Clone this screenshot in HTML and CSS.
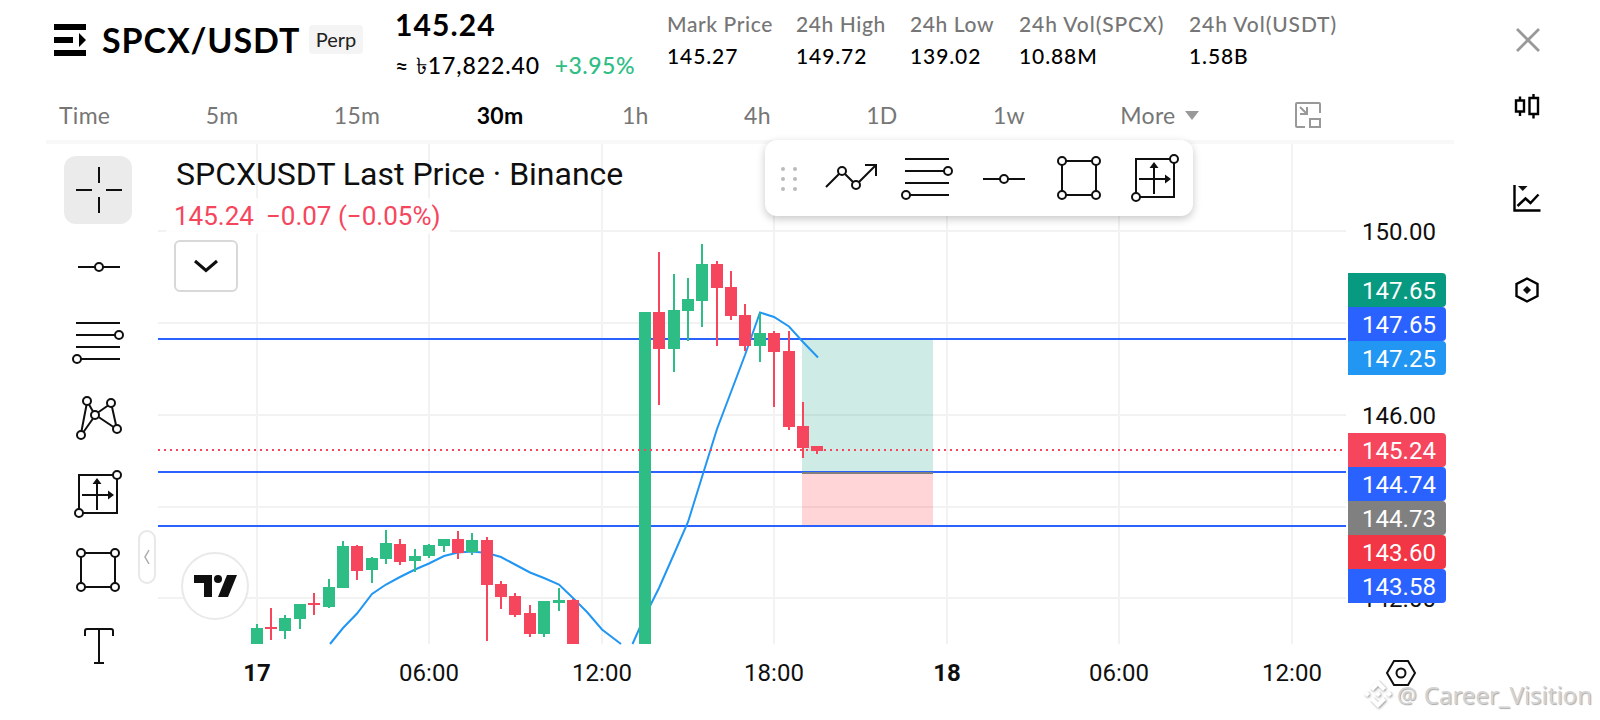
FILE: index.html
```html
<!DOCTYPE html>
<html lang="en">
  <head>
    <meta charset="utf-8" />
    <meta name="viewport" content="width=device-width,initial-scale=1" />
    <title>SPCX/USDT Perp</title>
    <link rel="stylesheet" href="styles.css">
  </head>
  <body>
    <!-- shared drawing tool icons -->
    <svg class="defs" width="0" height="0">
      <symbol id="i-line" viewBox="0 0 56 56">
        <path d="M7 28H24M32 28H49"/><circle cx="28" cy="28" r="4"/>
      </symbol>
      <symbol id="i-fib" viewBox="0 0 56 56">
        <path d="M5 8H49M5 20H44M5 32H49M10 44H49"/>
        <circle cx="48" cy="20" r="4"/><circle cx="6" cy="44" r="4"/>
      </symbol>
      <symbol id="i-rect" viewBox="0 0 56 56">
        <path d="M14 10H40M14 44H40M10 14V40M44 14V40"/>
        <circle cx="10" cy="10" r="4"/><circle cx="44" cy="10" r="4"/>
        <circle cx="10" cy="44" r="4"/><circle cx="44" cy="44" r="4"/>
      </symbol>
      <symbol id="i-range" viewBox="0 0 56 56">
        <path d="M42 8H8V42M12 46H46V12M26 43V14M11 28H41"/>
        <path class="solid" d="M26 11L30.5 17H21.5ZM43 28L37 23.5V32.5Z"/>
        <circle cx="46" cy="8" r="4"/><circle cx="8" cy="46" r="4"/>
      </symbol>
    </svg>

    <div class="screen">
      <div class="main">
        <div class="header">
          <svg class="menu" width="32" height="32" viewBox="0 0 32 32">
            <path d="M0 0H32V6H0ZM0 13H19V19H0ZM0 26H32V32H0ZM25 9L32 16L25 23Z"/>
          </svg>
          <div class="pair">SPCX/USDT</div>
          <div class="perp">Perp</div>
          <div class="price">
            <div class="last">145.24</div>
            <div class="sub">
              <span class="fiat">≈ ৳17,822.40</span>
              <span class="change">+3.95%</span>
            </div>
          </div>
          <div class="stats">
            <div class="stat s1"><div class="label">Mark Price</div><div class="value">145.27</div></div>
            <div class="stat s2"><div class="label">24h High</div><div class="value">149.72</div></div>
            <div class="stat s3"><div class="label">24h Low</div><div class="value">139.02</div></div>
            <div class="stat s4"><div class="label">24h Vol(SPCX)</div><div class="value">10.88M</div></div>
            <div class="stat s5"><div class="label">24h Vol(USDT)</div><div class="value">1.58B</div></div>
          </div>
        </div>

        <div class="intervals">
          <span>Time</span>
          <span>5m</span>
          <span>15m</span>
          <span class="active">30m</span>
          <span>1h</span>
          <span>4h</span>
          <span>1D</span>
          <span>1w</span>
          <span class="more">More <i class="caret"></i></span>
          <svg class="pip" width="28" height="28" viewBox="0 0 28 28">
            <path d="M11 26H3Q2 26 2 25V3Q2 2 3 2H25Q26 2 26 3V12M6 6L13 13M13 6V13H6M16 18H26V26H16Z"/>
          </svg>
        </div>

        <div class="board">
          <div class="rail">
            <div class="tool selected">
              <svg class="icon" width="56" height="56" viewBox="0 0 56 56">
                <path d="M29 5V21M29 35V51M6 28H22M36 28H52"/>
              </svg>
            </div>
            <svg class="icon" width="56" height="56"><use href="#i-line"/></svg>
            <svg class="icon" width="56" height="56"><use href="#i-fib"/></svg>
            <svg class="icon" width="56" height="56" viewBox="0 0 56 56">
              <path d="M18 13.500L22 20.500M27 21.500L37 14.500M41 16L45 34M42.500 36L27.500 26M22 27.500L12.500 41M15.500 14L10.500 40"/>
              <circle cx="16" cy="10" r="4"/><circle cx="40" cy="12" r="4"/><circle cx="24" cy="24" r="4"/>
              <circle cx="10" cy="44" r="4"/><circle cx="46" cy="38" r="4"/>
            </svg>
            <svg class="icon" width="56" height="56"><use href="#i-range"/></svg>
            <svg class="icon" width="56" height="56"><use href="#i-rect"/></svg>
            <svg class="icon" width="56" height="56" viewBox="0 0 56 56">
              <path d="M14 17V12Q14 10 16 10H40Q42 10 42 12V17M28 10V44M23 44H33"/>
            </svg>
            <div class="collapse">
              <svg width="8" height="16" viewBox="0 0 8 16"><path d="M6 1L2 8L6 15"/></svg>
            </div>
          </div>

          <div class="chart">
            <svg id="plot" class="plot" width="1296" height="576" viewBox="158 144 1296 576">
              <g id="grid" class="grid"></g>
              <g class="position">
                <rect class="profit" x="802" y="340" width="131" height="133"/>
                <rect class="loss" x="802" y="473" width="131" height="52"/>
              </g>
              <path class="level" d="M158 339H1346M158 472H1346M158 526H1346"/>
              <path class="entry" d="M802 473H933"/>
              <polyline class="ma" points="330,644 343,628 357,613.5 372,594 386,584.5 400,577 415,569.5 429,563.5 444,556 458,552.5 472,551.5 487,553 501,557 515,564.5 530,572.5 544,578 559,584.5 573,598 587,612 602,629.5 621,644"/>
              <polyline class="ma" points="632.5,644 645,616 659,588 674,554 688,522 702,477 717,429 731,392 745,355 760,312.5 774,317 789,326.5 803,342 818,357.5"/>
              <g id="candles"></g>
              <path class="last-line" d="M158 450H1346"/>
              <g id="axis" class="axis"></g>
              <path class="gear" d="M1394 661H1408L1415 673L1408 685H1394L1387 673Z"/>
              <circle class="gear" cx="1401" cy="673" r="4.5"/>
            </svg>

            <div class="legend">
              <div class="legend-title">SPCXUSDT Last Price · Binance</div>
              <div class="legend-values"><span>145.24</span><span>−0.07 (−0.05%)</span></div>
            </div>
            <div class="toggle">
              <svg width="26" height="14" viewBox="0 0 26 14"><path d="M2 2L13 11.5L24 2"/></svg>
            </div>

            <div class="tv">
              <svg width="44" height="22" viewBox="0 0 44 22">
                <path d="M1 0H19V22H11V8H1ZM34 0H44L35 22H25Z"/><circle cx="25" cy="4" r="4"/>
              </svg>
            </div>

            <div class="favorites">
              <svg class="grip" width="16" height="24" viewBox="0 0 16 24">
                <circle cx="2" cy="2" r="2"/><circle cx="14" cy="2" r="2"/>
                <circle cx="2" cy="12" r="2"/><circle cx="14" cy="12" r="2"/>
                <circle cx="2" cy="22" r="2"/><circle cx="14" cy="22" r="2"/>
              </svg>
              <svg class="icon" width="56" height="56" viewBox="0 0 56 56">
                <path d="M2 36L15 23M21 23L29 31M35 31L52 14M41 14H52V25"/>
                <circle cx="18" cy="20" r="4"/><circle cx="32" cy="34" r="4"/>
              </svg>
              <svg class="icon" width="56" height="56"><use href="#i-fib"/></svg>
              <svg class="icon" width="56" height="56"><use href="#i-line"/></svg>
              <svg class="icon" width="56" height="56"><use href="#i-rect"/></svg>
              <svg class="icon" width="56" height="56"><use href="#i-range"/></svg>
            </div>
          </div>
        </div>
      </div>

      <div class="side">
        <svg class="close" width="32" height="32" viewBox="0 0 32 32"><path d="M6 5L28 27M28 5L6 27"/></svg>
        <svg width="32" height="32" viewBox="0 0 32 32">
          <path d="M5 10.500H13V21.500H5ZM18.500 8H27V24H18.500ZM9 6.500V10M9 22V26M22.500 4V8M22.500 24V28.500"/>
        </svg>
        <svg width="32" height="32" viewBox="0 0 32 32">
          <path d="M3.500 3V28.500H29.500M6.500 24L14.500 16.500L19.500 21L27.500 12.500"/>
          <path class="solid" d="M7 4H16.500L11.800 9Z"/>
        </svg>
        <svg width="32" height="32" viewBox="0 0 32 32">
          <path d="M16 4.500L26.500 10V22L16 27.500L5.500 22V10Z"/>
          <path class="solid" d="M16 12L20 16L16 20L12 16Z"/>
        </svg>
      </div>
    </div>

    <div class="watermark">
      <svg width="30" height="30" viewBox="0 0 30 30">
        <path d="M15 1L23 9L20 12L15 7L10 12L7 9ZM4 12L7 15L4 18L1 15ZM26 12L29 15L26 18L23 15ZM15 12L18 15L15 18L12 15ZM10 18L15 23L20 18L23 21L15 29L7 21Z"/>
      </svg>
      <span class="at">@</span><span>Career_Visition</span>
    </div>

    <script src="chart.js"></script>
  </body>
</html>
```
FILE: styles.css
```css
body {
  margin: 0;
  background: #fff;
  color: #000;
  font-family: Lato, "Noto Sans", sans-serif;
}

svg {
  display: block;
  fill: none;
}

.defs {
  position: absolute;
}

.screen {
  display: flex;
  width: 1600px;
  height: 720px;
  overflow: hidden;
}

.main {
  width: 1408px;
  margin-left: 46px;
}

/* header */
.header {
  display: flex;
  height: 92px;
  white-space: nowrap;
}

.menu {
  margin: 24px 16px 0 8px;
  fill: #000;
}

.pair {
  width: 207px;
  margin-top: 20px;
  font-size: 34px;
  line-height: 40px;
  font-weight: 700;
  letter-spacing: 0.9px;
}

.perp {
  box-sizing: border-box;
  width: 54px;
  height: 29px;
  margin-top: 25px;
  border-radius: 4px;
  background: #f4f4f4;
  color: #202020;
  font-size: 20px;
  line-height: 29px;
  text-align: center;
}

.price {
  width: 272px;
  margin-left: 32px;
}

.last {
  margin-top: 6px;
  font-size: 30px;
  line-height: 36px;
  font-weight: 700;
  letter-spacing: 1.1px;
}

.sub {
  display: flex;
  justify-content: space-between;
  width: 240px;
  margin-top: 8px;
  font-size: 23px;
  line-height: 30px;
  font-weight: 500;
  letter-spacing: 0.9px;
}

.change {
  color: #2ebd85;
  letter-spacing: 0.5px;
}

.stats {
  display: flex;
  margin-top: 11px;
  font-size: 21px;
  line-height: 26px;
  font-weight: 500;
  letter-spacing: 0.9px;
}

.label {
  color: #767676;
}

.value {
  margin-top: 6px;
}

.s1 {
  width: 129px;
}

.s2 {
  width: 114px;
}

.s3 {
  width: 109px;
}

.s4 {
  width: 170px;
}

.s1 .label,
.s2 .label,
.s3 .label {
  letter-spacing: 0.6px;
}

/* interval tabs */
.intervals {
  display: flex;
  justify-content: space-between;
  align-items: center;
  height: 46px;
  padding: 0 132px 2px 13px;
  color: #767676;
  font-size: 23px;
  letter-spacing: 0.3px;
}

.intervals .active {
  margin: 0 3px 0 1px;
  color: #000;
  font-weight: 700;
}

.more {
  display: flex;
  align-items: center;
  gap: 9px;
}

.caret {
  border: 7px solid transparent;
  border-top: 9px solid #999;
  border-bottom: 0;
}

.pip {
  stroke: #999;
  stroke-width: 2;
}

/* board */
.board {
  display: flex;
  border-top: 4px solid #f8f8f8;
}

.rail {
  position: relative;
  display: flex;
  flex-direction: column;
  align-items: center;
  gap: 20px;
  width: 106px;
  height: 564px;
  padding-top: 12px;
  box-sizing: border-box;
  flex: none;
  margin-right: 6px;
}

.icon {
  flex: none;
  stroke: #0f0f0f;
  stroke-width: 2;
}

.icon .solid,
.solid {
  fill: #0f0f0f;
  stroke: none;
}

.tool.selected {
  display: flex;
  align-items: center;
  justify-content: center;
  width: 68px;
  height: 68px;
  margin: 0 2px -5px 0;
  border-radius: 12px;
  background: #ebebeb;
}

.collapse {
  position: absolute;
  left: 92px;
  top: 386px;
  display: flex;
  align-items: center;
  justify-content: center;
  box-sizing: border-box;
  width: 18px;
  height: 54px;
  border: 2px solid #e8e8e8;
  border-radius: 9px;
  background: #fff;
  stroke: #aaa;
  stroke-width: 1.5;
}

.chart {
  position: relative;
  width: 1296px;
  font-family: Roboto, sans-serif;
}

.grid {
  stroke: #f2f2f2;
  stroke-width: 2;
}

.profit {
  fill: #089981;
  fill-opacity: 0.2;
}

.loss {
  fill: #ff2d3c;
  fill-opacity: 0.2;
}

.level {
  stroke: #2962ff;
  stroke-width: 2;
}

.entry {
  stroke: #7f7f7f;
  stroke-width: 2;
}

.ma {
  stroke: #2196f3;
  stroke-width: 2;
}

.last-line {
  stroke: #f6465d;
  stroke-width: 2;
  stroke-dasharray: 2 4;
}

.up {
  fill: #2ebd85;
}

.down {
  fill: #f6465d;
}

.axis {
  fill: #0f0f0f;
  font-size: 24px;
  text-anchor: middle;
}

.axis .day {
  font-weight: 700;
}

.axis .tag {
  fill: #fff;
}

.gear {
  stroke: #0f0f0f;
  stroke-width: 2;
}

.legend {
  position: absolute;
  left: 8px;
  top: 10px;
  color: #0f0f0f;
  white-space: nowrap;
}

.legend-title {
  padding-left: 10px;
  font-size: 32px;
  line-height: 40px;
}

.legend-values {
  display: flex;
  gap: 12px;
  width: 284px;
  padding-left: 8px;
  margin-top: 4px;
  box-sizing: border-box;
  background: rgba(255, 255, 255, 0.8);
  color: #f6465d;
  font-size: 26px;
  line-height: 36px;
}

.toggle {
  position: absolute;
  left: 16px;
  top: 96px;
  display: flex;
  align-items: center;
  justify-content: center;
  box-sizing: border-box;
  width: 64px;
  height: 52px;
  border: 2px solid #d8d8d8;
  border-radius: 6px;
  background: #fff;
  stroke: #0f0f0f;
  stroke-width: 3;
}

.tv {
  position: absolute;
  left: 23px;
  top: 408px;
  display: flex;
  align-items: center;
  justify-content: center;
  box-sizing: border-box;
  width: 68px;
  height: 68px;
  border: 2px solid #e9e9e9;
  border-radius: 50%;
  background: #fff;
}

.tv svg {
  fill: #0f0f0f;
}

.favorites {
  position: absolute;
  left: 607px;
  top: -4px;
  display: flex;
  align-items: center;
  gap: 20px;
  box-sizing: border-box;
  width: 428px;
  height: 76px;
  padding: 2px 0 0 16px;
  border-radius: 12px;
  background: #fff;
  box-shadow: 0 3px 8px rgba(0, 0, 0, 0.22);
}

.grip {
  margin-right: 7px;
  fill: #bbb;
}

/* right side */
.side {
  display: flex;
  flex-direction: column;
  gap: 60px;
  padding: 24px 0 0 57px;
  stroke: #000;
  stroke-width: 2.4;
}

.close {
  margin-bottom: -26px;
  stroke: #999;
  stroke-width: 2.8;
}

.watermark {
  position: absolute;
  left: 1363px;
  top: 678px;
  display: flex;
  align-items: center;
  height: 32px;
  color: #d4d4d4;
  font-family: "Noto Sans", sans-serif;
  font-size: 24px;
  text-shadow: 1px 1px 1px #aaa;
}

.watermark svg {
  fill: #fff;
  filter: drop-shadow(1px 1px 1px #999);
}

.at {
  margin: 0 7px 0 4px;
  font-size: 22px;
}
```
FILE: chart.js
```js
// x, wick top, wick bottom, body top, body bottom, direction
var candles = [
  [257, 624, 644, 628, 644, "up"],
  [271, 608, 640, 627, 629, "down"],
  [285, 615, 639, 618, 631, "up"],
  [300, 604, 629, 604, 619, "up"],
  [314, 593, 615, 603, 605, "down"],
  [329, 579, 608, 587, 607, "up"],
  [343, 541, 588, 546, 588, "up"],
  [357, 545, 580, 546, 571, "down"],
  [372, 557, 583, 558, 570, "up"],
  [386, 530, 564, 543, 559, "up"],
  [400, 539, 565, 544, 562, "down"],
  [415, 549, 572, 556, 561, "up"],
  [429, 544, 558, 545, 556, "up"],
  [444, 539, 552, 539, 546, "up"],
  [458, 531, 559, 539, 553, "down"],
  [472, 533, 555, 540, 552, "up"],
  [487, 537, 641, 540, 585, "down"],
  [501, 581, 609, 584, 597, "down"],
  [515, 593, 617, 596, 615, "down"],
  [530, 605, 637, 613, 634, "down"],
  [544, 601, 637, 601, 634, "up"],
  [559, 588, 611, 600, 603, "up"],
  [573, 599, 644, 600, 644, "down"],
  [645, 312, 644, 312, 644, "up"],
  [659, 252, 405, 312, 349, "down"],
  [674, 274, 372, 310, 349, "up"],
  [688, 278, 341, 299, 311, "up"],
  [702, 244, 327, 264, 301, "up"],
  [717, 261, 346, 264, 288, "down"],
  [731, 271, 320, 287, 316, "down"],
  [745, 304, 351, 315, 346, "down"],
  [760, 313, 362, 333, 346, "up"],
  [774, 331, 407, 333, 352, "down"],
  [789, 331, 430, 351, 427, "down"],
  [803, 402, 458, 426, 448, "down"],
  [817, 446, 454, 446, 451, "down"]
];

var times = [
  [257, "17", "day"], [429, "06:00", ""], [602, "12:00", ""], [774, "18:00", ""],
  [947, "18", "day"], [1119, "06:00", ""], [1292, "12:00", ""]
];

var prices = [[231, "150.00"], [323, ""], [415, "146.00"], [507, ""], [598, "142.00"]];

var tags = [
  [273, "147.65", "#089981"],
  [307, "147.65", "#2962ff"],
  [341, "147.25", "#2196f3"],
  [433, "145.24", "#f6465d"],
  [467, "144.74", "#2962ff"],
  [501, "144.73", "#808080"],
  [535, "143.60", "#f23645"],
  [569, "143.58", "#2962ff"]
];

function add(parent, name, attrs, text) {
  var el = document.createElementNS("http://www.w3.org/2000/svg", name);
  for (var k in attrs) el.setAttribute(k, attrs[k]);
  if (text) el.textContent = text;
  document.getElementById(parent).appendChild(el);
}

times.forEach(function (t) {
  add("grid", "path", { d: "M" + t[0] + " 144V644" });
  add("axis", "text", { x: t[0], y: 681, class: t[2] }, t[1]);
});

prices.forEach(function (p) {
  add("grid", "path", { d: "M158 " + p[0] + "H1346" });
  if (p[1]) add("axis", "text", { x: 1399, y: p[0] + 9 }, p[1]);
});

candles.forEach(function (c) {
  add("candles", "rect", { x: c[0] - 1, y: c[1], width: 2, height: c[2] - c[1], class: c[5] });
  add("candles", "rect", { x: c[0] - 6, y: c[3], width: 12, height: c[4] - c[3], class: c[5] });
});

tags.forEach(function (t) {
  var y = t[0];
  add("axis", "path", { d: "M1348 " + y + "H1442Q1446 " + y + " 1446 " + (y + 4) + "V" + (y + 30) + "Q1446 " + (y + 34) + " 1442 " + (y + 34) + "H1348Z", fill: t[2] });
  add("axis", "text", { x: 1399, y: y + 26, class: "tag" }, t[1]);
});
```
